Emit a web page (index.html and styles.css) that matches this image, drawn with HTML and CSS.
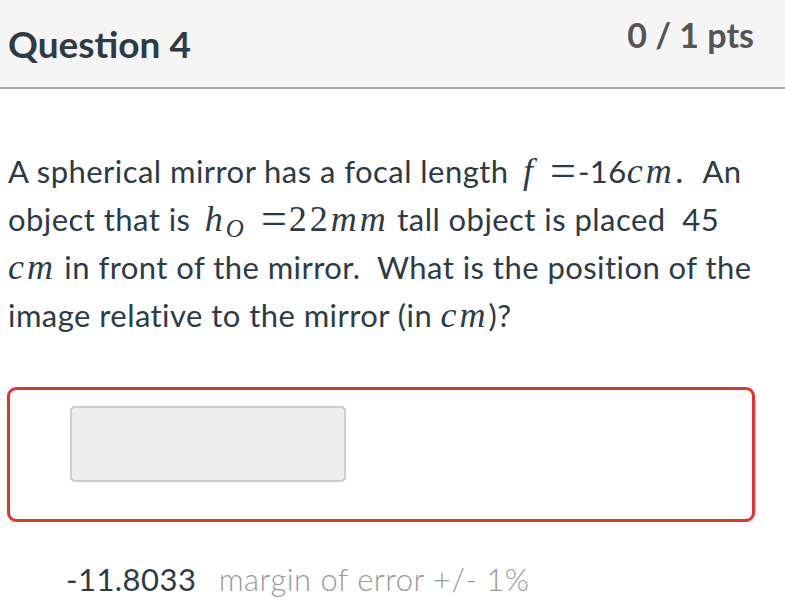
FILE: index.html
```html
<!DOCTYPE html>
<html>
<head>
<meta charset="utf-8">
<link rel="stylesheet" href="styles.css">
</head>
<body>
<div class="header">
  <div class="title">Question 4</div>
  <div class="pts">0 / 1 pts</div>
</div>
<div class="question">
  A spherical mirror has a focal length <span class="m lead"><i>f</i><span class="eq">=</span></span>-16<span class="m"><i>cm</i>.</span>&nbsp; An<br>object that is <span class="m lead"><i>h</i><sub><i>O</i></sub><span class="eq">=</span>22<i>mm</i></span> tall object is placed &nbsp;45<br><span class="m"><i>cm</i></span> in front of the mirror.&nbsp; What is the position of the<br>image relative to the mirror (in <span class="m"><i>cm</i></span>)?
</div>
<div class="answer-box">
  <div class="input"></div>
</div>
<div class="answer">
  <span class="value">-11.8033</span>
  <span class="margin">margin of error +/- 1%</span>
</div>
</body>
</html>
```
FILE: styles.css
```css
html, body {
  margin: 0;
  padding: 0;
  background: #ffffff;
}
body {
  font-family: Lato, "Liberation Sans", sans-serif;
  color: #2d3b45;
}
.header {
  background: #f5f5f5;
  height: 87px;
  border-bottom: 2px solid #a8a8a8;
  display: flex;
  justify-content: space-between;
  align-items: flex-start;
  padding: 0 31px 0 8px;
}
.title {
  font-weight: 700;
  font-size: 37px;
  margin-top: 20px;
  line-height: 48px;
}
.pts {
  font-weight: 700;
  font-size: 34px;
  color: #555555;
  margin-top: 11px;
  line-height: 48px;
}
.question {
  margin: 58px 20px 0 8px;
  font-size: 31px;
  letter-spacing: 0.45px;
  line-height: 48px;
  white-space: nowrap;
}
.m {
  font-family: "Liberation Serif", "DejaVu Serif", serif;
  font-size: 36px;
  letter-spacing: 3px;
  line-height: 0;
}
.m.lead {
  margin-left: 6px;
}
.m i {
  font-style: italic;
}
.m sub {
  font-size: 25px;
  line-height: 0;
  vertical-align: -6px;
}
.eq {
  display: inline-block;
  font-size: 46px;
  line-height: 0;
  letter-spacing: 0;
  margin: 0 2px 0 14px;
  vertical-align: -3px;
  font-weight: 400;
}
.answer-box {
  margin: 48px 30px 0 7px;
  border: 3px solid #e4342a;
  border-radius: 9px;
  padding: 16px 0 0 60px;
  box-sizing: border-box;
  height: 135px;
}
.input {
  width: 276px;
  height: 76px;
  box-sizing: border-box;
  background: #eeeeee;
  border: 2px solid #cccccc;
  border-radius: 5px;
}
.answer {
  margin: 33px 0 0 66px;
  font-size: 31px;
  letter-spacing: 0.45px;
  line-height: 48px;
}
.value {
  color: #2d3b45;
  margin-right: 14px;
}
.margin {
  color: #9a9a9a;
  font-weight: 300;
}
```
